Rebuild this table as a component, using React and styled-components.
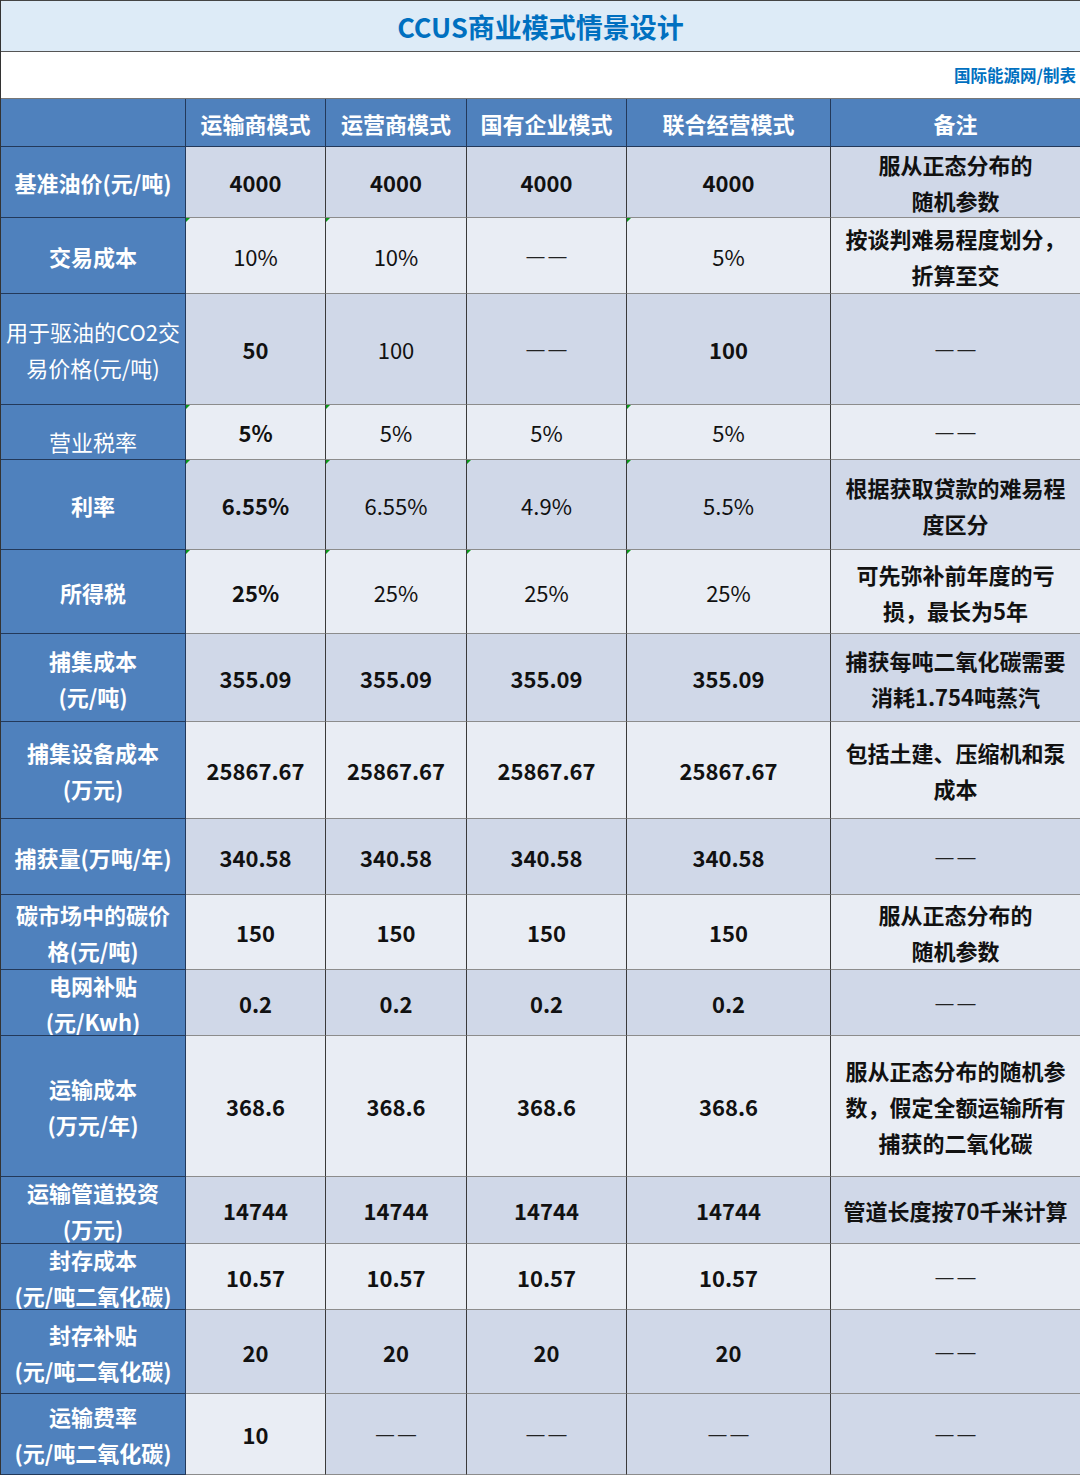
import React, { Fragment } from "react";
import styled, { createGlobalStyle, css } from "styled-components";

const GlobalStyle = createGlobalStyle`
    body {
        margin: 0;
        background: #ffffff;
        font-family: "Noto Sans CJK SC", "Noto Sans", sans-serif;
    }
`;

const Sheet = styled.div`
    width: 1080px;
    height: 1475px;
    box-sizing: border-box;
    border-left: 1px solid #333;
    overflow: hidden;
`;

const TitleBar = styled.div`
    height: 52px;
    box-sizing: border-box;
    background: #ddebf7;
    border-top: 1px solid #444;
    border-bottom: 1px solid #555;
    display: flex;
    align-items: center;
    justify-content: center;
    color: #0070c0;
    font-size: 27px;
    font-weight: bold;
`;

const SourceBar = styled.div`
    height: 47px;
    box-sizing: border-box;
    background: #ffffff;
    border-bottom: 1px solid #777;
    display: flex;
    align-items: center;
    justify-content: flex-end;
    padding-right: 4px;
    color: #0070c0;
    font-size: 16.5px;
    font-weight: bold;
`;

const Grid = styled.div`
    display: grid;
    grid-template-columns: 185px 140px 141px 160px 204px 249px;
    grid-template-rows: 48px 71px 76px 111px 55px 90px 84px 88px 97px 76px 75px 66px 141px 67px 66px 84px 81px;
`;

const Cell = styled.div`
    position: relative;
    box-sizing: border-box;
    display: flex;
    align-items: center;
    justify-content: center;
    text-align: center;
    border-right: 1px solid #3a3a3a;
    border-bottom: 1px solid #8c8c8c;
    color: #111;
    font-size: 22px;
    line-height: 36px;
    font-weight: ${(p) => (p.$bold ? "bold" : "normal")};
    background: ${(p) => (p.$tone === "dark" ? "#d0d8e8" : "#e9edf4")};
    overflow: hidden;
    ${(p) =>
        p.$flag &&
        css`
            &::before {
                content: "";
                position: absolute;
                top: 0;
                left: 0;
                border-top: 4px solid #0a9a1a;
                border-right: 4px solid transparent;
            }
        `}
`;

const HeadCell = styled(Cell)`
    background: #4f81bd;
    color: #ffffff;
    font-weight: bold;
    border-right: 1px solid #23395a;
    border-bottom: 1px solid #23395a;
`;

const LabelCell = styled(Cell)`
    background: #4f81bd;
    color: #ffffff;
    border-right: 1px solid #23395a;
    border-bottom: 1px solid #23395a;
    padding-top: ${(p) => p.$shift || 0}px;
`;

const NoteCell = styled(Cell)`
    border-right: none;
    font-weight: bold;
    white-space: nowrap;
`;

const Dash = styled.span`
    font-family: "Liberation Sans", sans-serif;
    font-weight: normal;
    font-size: 18px;
    letter-spacing: 4px;
    margin-right: -4px;
    color: #222;
`;

const D = "——";

const heads = ["运输商模式", "运营商模式", "国有企业模式", "联合经营模式", "备注"];

// [value, bold, green corner flag, tone override]
const rows = [
    { label: ["基准油价(元/吨)"], tone: "dark", cells: [["4000", 1], ["4000", 1], ["4000", 1], ["4000", 1]], note: ["服从正态分布的", "随机参数"] },
    { label: ["交易成本"], tone: "light", cells: [["10%", 0, 1], ["10%", 0, 1], [D], ["5%", 0, 1]], note: ["按谈判难易程度划分，", "折算至交"] },
    { label: ["用于驱油的CO2交", "易价格(元/吨)"], regular: true, tone: "dark", cells: [["50", 1], ["100", 0], [D], ["100", 1]], note: null },
    { label: ["营业税率"], regular: true, shift: 18, tone: "light", cells: [["5%", 1, 1], ["5%", 0, 1], ["5%", 0], ["5%", 0, 1]], note: null },
    { label: ["利率"], tone: "dark", cells: [["6.55%", 1, 1], ["6.55%", 0, 1], ["4.9%", 0, 1], ["5.5%", 0, 1]], note: ["根据获取贷款的难易程", "度区分"] },
    { label: ["所得税"], tone: "light", cells: [["25%", 1, 1], ["25%", 0, 1], ["25%", 0, 1], ["25%", 0, 1]], note: ["可先弥补前年度的亏", "损，最长为5年"] },
    { label: ["捕集成本", "(元/吨)"], tone: "dark", cells: [["355.09", 1], ["355.09", 1], ["355.09", 1], ["355.09", 1]], note: ["捕获每吨二氧化碳需要", "消耗1.754吨蒸汽"] },
    { label: ["捕集设备成本", "(万元)"], tone: "light", cells: [["25867.67", 1], ["25867.67", 1], ["25867.67", 1], ["25867.67", 1]], note: ["包括土建、压缩机和泵", "成本"] },
    { label: ["捕获量(万吨/年)"], tone: "dark", cells: [["340.58", 1], ["340.58", 1], ["340.58", 1], ["340.58", 1]], note: null },
    { label: ["碳市场中的碳价", "格(元/吨)"], tone: "light", cells: [["150", 1], ["150", 1], ["150", 1], ["150", 1]], note: ["服从正态分布的", "随机参数"] },
    { label: ["电网补贴", "(元/Kwh)"], tone: "dark", cells: [["0.2", 1], ["0.2", 1], ["0.2", 1], ["0.2", 1]], note: null },
    { label: ["运输成本", "(万元/年)"], tone: "light", cells: [["368.6", 1], ["368.6", 1], ["368.6", 1], ["368.6", 1]], note: ["服从正态分布的随机参", "数，假定全额运输所有", "捕获的二氧化碳"] },
    { label: ["运输管道投资", "(万元)"], tone: "dark", cells: [["14744", 1], ["14744", 1], ["14744", 1], ["14744", 1]], note: ["管道长度按70千米计算"] },
    { label: ["封存成本", "(元/吨二氧化碳)"], tone: "light", cells: [["10.57", 1], ["10.57", 1], ["10.57", 1], ["10.57", 1]], note: null },
    { label: ["封存补贴", "(元/吨二氧化碳)"], tone: "dark", cells: [["20", 1], ["20", 1], ["20", 1], ["20", 1]], note: null },
    { label: ["运输费率", "(元/吨二氧化碳)"], tone: "dark", cells: [["10", 1, 0, "light"], [D], [D], [D]], note: null },
];

const Lines = ({ lines }) =>
    lines.map((l, i) => (
        <Fragment key={i}>
            {i > 0 && <br />}
            {l}
        </Fragment>
    ));

const App = () => {
    return (
        <Fragment>
            <GlobalStyle />
            <Sheet>
                <TitleBar>CCUS商业模式情景设计</TitleBar>
                <SourceBar>国际能源网/制表</SourceBar>
                <Grid>
                    <HeadCell />
                    {heads.map((h, i) => (
                        <HeadCell key={h} style={i === heads.length - 1 ? { borderRight: "none" } : undefined}>
                            {h}
                        </HeadCell>
                    ))}
                    {rows.map((r, ri) => (
                        <Fragment key={ri}>
                            <LabelCell $bold={!r.regular} $shift={r.shift}>
                                <div>
                                    <Lines lines={r.label} />
                                </div>
                            </LabelCell>
                            {r.cells.map(([v, bold, flag, tone], ci) => (
                                <Cell key={ci} $bold={!!bold} $flag={!!flag} $tone={tone || r.tone}>
                                    {v === D ? <Dash>{D}</Dash> : v}
                                </Cell>
                            ))}
                            <NoteCell $tone={r.tone}>
                                {r.note ? (
                                    <div>
                                        <Lines lines={r.note} />
                                    </div>
                                ) : (
                                    <Dash>{D}</Dash>
                                )}
                            </NoteCell>
                        </Fragment>
                    ))}
                </Grid>
            </Sheet>
        </Fragment>
    );
};

export default App;
